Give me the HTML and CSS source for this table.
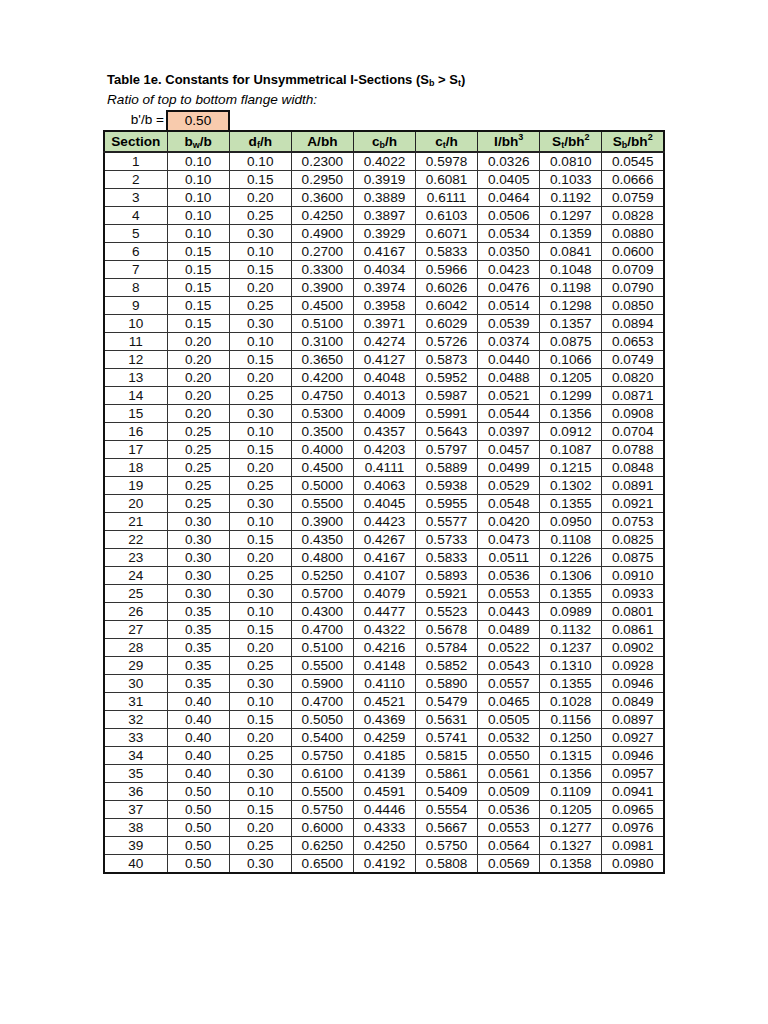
FILE: index.html
```html
<!DOCTYPE html>
<html>
<head>
<meta charset="utf-8">
<link rel="stylesheet" href="styles.css">
</head>
<body>
<div class="page">
  <div class="title">Table 1e. Constants for Unsymmetrical I-Sections (S<sub>b</sub> &gt; S<sub>t</sub>)</div>
  <div class="subtitle">Ratio of top to bottom flange width:</div>
  <div class="ratio">
    <div class="ratio-label">b'/b =</div>
    <div class="ratio-box">0.50</div>
  </div>
  <table class="tbl">
    <colgroup>
      <col class="c-sec"><col class="c"><col class="c"><col class="c"><col class="c"><col class="c"><col class="c"><col class="c"><col class="c">
    </colgroup>
    <thead>
      <tr>
        <th>Section</th>
        <th>b<sub>w</sub>/b</th>
        <th>d<sub>f</sub>/h</th>
        <th>A/bh</th>
        <th>c<sub>b</sub>/h</th>
        <th>c<sub>t</sub>/h</th>
        <th>I/bh<sup>3</sup></th>
        <th>S<sub>t</sub>/bh<sup>2</sup></th>
        <th>S<sub>b</sub>/bh<sup>2</sup></th>
      </tr>
    </thead>
    <tbody>
<tr><td>1</td><td>0.10</td><td>0.10</td><td>0.2300</td><td>0.4022</td><td>0.5978</td><td>0.0326</td><td>0.0810</td><td>0.0545</td></tr>
<tr><td>2</td><td>0.10</td><td>0.15</td><td>0.2950</td><td>0.3919</td><td>0.6081</td><td>0.0405</td><td>0.1033</td><td>0.0666</td></tr>
<tr><td>3</td><td>0.10</td><td>0.20</td><td>0.3600</td><td>0.3889</td><td>0.6111</td><td>0.0464</td><td>0.1192</td><td>0.0759</td></tr>
<tr><td>4</td><td>0.10</td><td>0.25</td><td>0.4250</td><td>0.3897</td><td>0.6103</td><td>0.0506</td><td>0.1297</td><td>0.0828</td></tr>
<tr><td>5</td><td>0.10</td><td>0.30</td><td>0.4900</td><td>0.3929</td><td>0.6071</td><td>0.0534</td><td>0.1359</td><td>0.0880</td></tr>
<tr><td>6</td><td>0.15</td><td>0.10</td><td>0.2700</td><td>0.4167</td><td>0.5833</td><td>0.0350</td><td>0.0841</td><td>0.0600</td></tr>
<tr><td>7</td><td>0.15</td><td>0.15</td><td>0.3300</td><td>0.4034</td><td>0.5966</td><td>0.0423</td><td>0.1048</td><td>0.0709</td></tr>
<tr><td>8</td><td>0.15</td><td>0.20</td><td>0.3900</td><td>0.3974</td><td>0.6026</td><td>0.0476</td><td>0.1198</td><td>0.0790</td></tr>
<tr><td>9</td><td>0.15</td><td>0.25</td><td>0.4500</td><td>0.3958</td><td>0.6042</td><td>0.0514</td><td>0.1298</td><td>0.0850</td></tr>
<tr><td>10</td><td>0.15</td><td>0.30</td><td>0.5100</td><td>0.3971</td><td>0.6029</td><td>0.0539</td><td>0.1357</td><td>0.0894</td></tr>
<tr><td>11</td><td>0.20</td><td>0.10</td><td>0.3100</td><td>0.4274</td><td>0.5726</td><td>0.0374</td><td>0.0875</td><td>0.0653</td></tr>
<tr><td>12</td><td>0.20</td><td>0.15</td><td>0.3650</td><td>0.4127</td><td>0.5873</td><td>0.0440</td><td>0.1066</td><td>0.0749</td></tr>
<tr><td>13</td><td>0.20</td><td>0.20</td><td>0.4200</td><td>0.4048</td><td>0.5952</td><td>0.0488</td><td>0.1205</td><td>0.0820</td></tr>
<tr><td>14</td><td>0.20</td><td>0.25</td><td>0.4750</td><td>0.4013</td><td>0.5987</td><td>0.0521</td><td>0.1299</td><td>0.0871</td></tr>
<tr><td>15</td><td>0.20</td><td>0.30</td><td>0.5300</td><td>0.4009</td><td>0.5991</td><td>0.0544</td><td>0.1356</td><td>0.0908</td></tr>
<tr><td>16</td><td>0.25</td><td>0.10</td><td>0.3500</td><td>0.4357</td><td>0.5643</td><td>0.0397</td><td>0.0912</td><td>0.0704</td></tr>
<tr><td>17</td><td>0.25</td><td>0.15</td><td>0.4000</td><td>0.4203</td><td>0.5797</td><td>0.0457</td><td>0.1087</td><td>0.0788</td></tr>
<tr><td>18</td><td>0.25</td><td>0.20</td><td>0.4500</td><td>0.4111</td><td>0.5889</td><td>0.0499</td><td>0.1215</td><td>0.0848</td></tr>
<tr><td>19</td><td>0.25</td><td>0.25</td><td>0.5000</td><td>0.4063</td><td>0.5938</td><td>0.0529</td><td>0.1302</td><td>0.0891</td></tr>
<tr><td>20</td><td>0.25</td><td>0.30</td><td>0.5500</td><td>0.4045</td><td>0.5955</td><td>0.0548</td><td>0.1355</td><td>0.0921</td></tr>
<tr><td>21</td><td>0.30</td><td>0.10</td><td>0.3900</td><td>0.4423</td><td>0.5577</td><td>0.0420</td><td>0.0950</td><td>0.0753</td></tr>
<tr><td>22</td><td>0.30</td><td>0.15</td><td>0.4350</td><td>0.4267</td><td>0.5733</td><td>0.0473</td><td>0.1108</td><td>0.0825</td></tr>
<tr><td>23</td><td>0.30</td><td>0.20</td><td>0.4800</td><td>0.4167</td><td>0.5833</td><td>0.0511</td><td>0.1226</td><td>0.0875</td></tr>
<tr><td>24</td><td>0.30</td><td>0.25</td><td>0.5250</td><td>0.4107</td><td>0.5893</td><td>0.0536</td><td>0.1306</td><td>0.0910</td></tr>
<tr><td>25</td><td>0.30</td><td>0.30</td><td>0.5700</td><td>0.4079</td><td>0.5921</td><td>0.0553</td><td>0.1355</td><td>0.0933</td></tr>
<tr><td>26</td><td>0.35</td><td>0.10</td><td>0.4300</td><td>0.4477</td><td>0.5523</td><td>0.0443</td><td>0.0989</td><td>0.0801</td></tr>
<tr><td>27</td><td>0.35</td><td>0.15</td><td>0.4700</td><td>0.4322</td><td>0.5678</td><td>0.0489</td><td>0.1132</td><td>0.0861</td></tr>
<tr><td>28</td><td>0.35</td><td>0.20</td><td>0.5100</td><td>0.4216</td><td>0.5784</td><td>0.0522</td><td>0.1237</td><td>0.0902</td></tr>
<tr><td>29</td><td>0.35</td><td>0.25</td><td>0.5500</td><td>0.4148</td><td>0.5852</td><td>0.0543</td><td>0.1310</td><td>0.0928</td></tr>
<tr><td>30</td><td>0.35</td><td>0.30</td><td>0.5900</td><td>0.4110</td><td>0.5890</td><td>0.0557</td><td>0.1355</td><td>0.0946</td></tr>
<tr><td>31</td><td>0.40</td><td>0.10</td><td>0.4700</td><td>0.4521</td><td>0.5479</td><td>0.0465</td><td>0.1028</td><td>0.0849</td></tr>
<tr><td>32</td><td>0.40</td><td>0.15</td><td>0.5050</td><td>0.4369</td><td>0.5631</td><td>0.0505</td><td>0.1156</td><td>0.0897</td></tr>
<tr><td>33</td><td>0.40</td><td>0.20</td><td>0.5400</td><td>0.4259</td><td>0.5741</td><td>0.0532</td><td>0.1250</td><td>0.0927</td></tr>
<tr><td>34</td><td>0.40</td><td>0.25</td><td>0.5750</td><td>0.4185</td><td>0.5815</td><td>0.0550</td><td>0.1315</td><td>0.0946</td></tr>
<tr><td>35</td><td>0.40</td><td>0.30</td><td>0.6100</td><td>0.4139</td><td>0.5861</td><td>0.0561</td><td>0.1356</td><td>0.0957</td></tr>
<tr><td>36</td><td>0.50</td><td>0.10</td><td>0.5500</td><td>0.4591</td><td>0.5409</td><td>0.0509</td><td>0.1109</td><td>0.0941</td></tr>
<tr><td>37</td><td>0.50</td><td>0.15</td><td>0.5750</td><td>0.4446</td><td>0.5554</td><td>0.0536</td><td>0.1205</td><td>0.0965</td></tr>
<tr><td>38</td><td>0.50</td><td>0.20</td><td>0.6000</td><td>0.4333</td><td>0.5667</td><td>0.0553</td><td>0.1277</td><td>0.0976</td></tr>
<tr><td>39</td><td>0.50</td><td>0.25</td><td>0.6250</td><td>0.4250</td><td>0.5750</td><td>0.0564</td><td>0.1327</td><td>0.0981</td></tr>
<tr><td>40</td><td>0.50</td><td>0.30</td><td>0.6500</td><td>0.4192</td><td>0.5808</td><td>0.0569</td><td>0.1358</td><td>0.0980</td></tr>
    </tbody>
  </table>
</div>
</body>
</html>
```

FILE: styles.css
```css
html, body {
  margin: 0;
  padding: 0;
  background: #ffffff;
}
body {
  font-family: "Liberation Sans", Arial, sans-serif;
  color: #000;
}
.page {
  padding: 71px 0 0 103px;
}
.title {
  font-weight: bold;
  font-size: 13px;
  line-height: 18px;
  padding-left: 4px;
  height: 20px;
}
.title sub {
  font-size: 9px;
  vertical-align: -2px;
  line-height: 0;
}
.subtitle {
  font-style: italic;
  font-size: 13.6px;
  line-height: 18px;
  padding-left: 4px;
  height: 19px;
}
.ratio {
  display: flex;
  height: 20px;
  align-items: stretch;
}
.ratio-label {
  width: 61px;
  text-align: right;
  font-size: 13.6px;
  line-height: 20px;
  padding-right: 2px;
}
.ratio-box {
  width: 60px;
  background: #f8cbad;
  border: 2px solid #111;
  border-bottom: 0;
  text-align: center;
  font-size: 13.6px;
  line-height: 18px;
}
.tbl {
  border-collapse: collapse;
  border: 2px solid #111;
  table-layout: fixed;
  width: 562px;
  font-size: 13.6px;
}
.c-sec { width: 63px; }
.c { width: 62px; }
.tbl th {
  background: #c6e0b4;
  font-weight: bold;
  height: 19px;
  padding: 0;
  border: 1px solid #222;
  border-bottom: 2px solid #222;
  line-height: 19px;
  text-align: center;
}
.tbl th sub {
  font-size: 9px;
  vertical-align: -2px;
  line-height: 0;
}
.tbl th sup {
  font-size: 9px;
  vertical-align: 6px;
  line-height: 0;
}
.tbl td {
  height: 17px;
  padding: 0;
  border: 1px solid #333;
  text-align: center;
  line-height: 17px;
  color: #111;
}
```
